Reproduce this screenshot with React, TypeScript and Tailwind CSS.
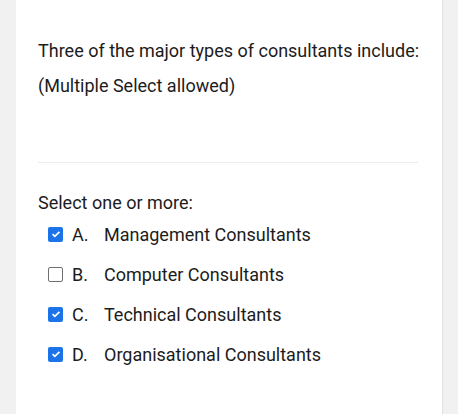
import React from "react";

type Option = { letter: string; label: string; checked: boolean };

const options: Option[] = [
  { letter: "A.", label: "Management Consultants", checked: true },
  { letter: "B.", label: "Computer Consultants", checked: false },
  { letter: "C.", label: "Technical Consultants", checked: true },
  { letter: "D.", label: "Organisational Consultants", checked: true },
];

const Check = ({ checked }: { checked: boolean }) =>
  checked ? (
    <span className="flex h-[15px] w-[15px] items-center justify-center rounded-[2px] bg-[#1a73e8]">
      <svg viewBox="0 0 14 14" className="h-[12px] w-[12px]">
        <path d="M3 7.2l2.6 2.6L11 4.4" fill="none" stroke="#fff" strokeWidth="2" />
      </svg>
    </span>
  ) : (
    <span className="h-[15px] w-[15px] rounded-[2px] border border-[#6f6f6f] bg-white" />
  );

export default function App() {
  return (
    <div className="h-[414px] w-full bg-[#f1f1f1] px-[16px] font-['Roboto',sans-serif] text-[#1c1c1c]">
      <div className="h-full w-[426px] bg-white px-[22px] pt-[33px] shadow-[1px_0_1px_rgba(0,0,0,0.06)]">
        <p className="text-[18px] leading-[35px]">
          Three of the major types of consultants include:
          <br />
          (Multiple Select allowed)
        </p>
        <div className="mt-[59px] h-px w-[380px] bg-[#ececec]" />
        <p className="mt-[28px] text-[18px] leading-[24px]">Select one or more:</p>
        <div className="-mt-px flex flex-col">
          {options.map((o) => (
            <div key={o.letter} className="flex h-[40px] items-center pl-[10px] text-[18px]">
              <Check checked={o.checked} />
              <span className="ml-[9px] w-[32px]">{o.letter}</span>
              <span>{o.label}</span>
            </div>
          ))}
        </div>
      </div>
    </div>
  );
}
